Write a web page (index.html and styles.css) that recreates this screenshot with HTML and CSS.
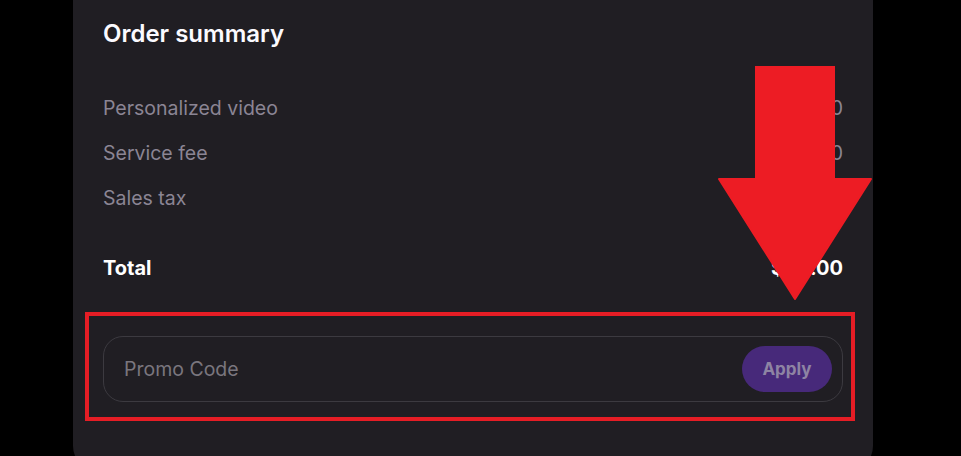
FILE: index.html
```html
<!DOCTYPE html>
<html lang="en">
<head>
<meta charset="utf-8">
<title>Order summary</title>
<link rel="stylesheet" href="styles.css">
</head>
<body>
<div class="page">
  <section class="card">
    <h2 class="title">Order summary</h2>
    <ul class="lines">
      <li class="line"><span>Personalized video</span><span>$80.00</span></li>
      <li class="line"><span>Service fee</span><span>$10.00</span></li>
      <li class="line"><span>Sales tax</span><span>$0.00</span></li>
    </ul>
    <div class="total"><span>Total</span><span>$90.00</span></div>
    <form class="promo">
      <input class="promo-input" type="text" placeholder="Promo Code">
      <button class="promo-btn" type="button">Apply</button>
    </form>
  </section>
  <div class="highlight"></div>
  <svg class="arrow" width="154" height="234" viewBox="0 0 154 234" aria-hidden="true">
    <polygon points="38,0 116,0 116,113 153,113 77,233 1,113 38,113" fill="#ed1c24" stroke="#ed1c24" stroke-width="2" stroke-linejoin="round"/>
  </svg>
</div>
</body>
</html>
```

FILE: styles.css
```css
* { box-sizing: border-box; }
html, body {
  margin: 0;
  padding: 0;
  background: #000;
  overflow: hidden;
}
body {
  font-family: Inter, "Noto Sans", sans-serif;
  width: 961px;
  height: 456px;
}
.page {
  position: relative;
  width: 961px;
  height: 456px;
  overflow: hidden;
}
.card {
  margin-left: 73px;
  width: 800px;
  height: 470px;
  background: #201e23;
  border-radius: 0 0 24px 24px;
  padding: 19px 30px 0 30px;
}
.title {
  margin: 0;
  font-size: 24px;
  line-height: 30px;
  font-weight: 600;
  color: #fbfaff;
}
.lines {
  list-style: none;
  margin: 46px 0 0 0;
  padding: 0;
  display: flex;
  flex-direction: column;
  gap: 18px;
}
.line, .total {
  display: flex;
  justify-content: space-between;
  font-size: 19.5px;
  line-height: 27px;
}
.line { color: #8b8594; }
.total {
  margin-top: 43px;
  color: #fff;
  font-size: 20px;
  font-weight: 700;
}
.promo {
  margin-top: 54px;
  height: 66px;
  border: 1px solid #3c3a40;
  border-radius: 20px;
  display: flex;
  align-items: center;
  padding: 0 10px 0 20px;
}
.promo-input {
  flex: 1;
  background: transparent;
  border: 0;
  outline: none;
  font-family: inherit;
  font-size: 19.5px;
  color: #ccc;
  padding: 0;
}
.promo-input::placeholder { color: #7a767e; }
.promo-btn {
  width: 90px;
  height: 46px;
  border: 0;
  border-radius: 23px;
  background: #47297a;
  color: #8e84a3;
  font-family: inherit;
  font-size: 17px;
  font-weight: 700;
}
.highlight {
  position: absolute;
  left: 85px;
  top: 312px;
  width: 770px;
  height: 109px;
  border: 4px solid #e51d25;
}
.arrow {
  position: absolute;
  left: 718px;
  top: 66px;
}
```
